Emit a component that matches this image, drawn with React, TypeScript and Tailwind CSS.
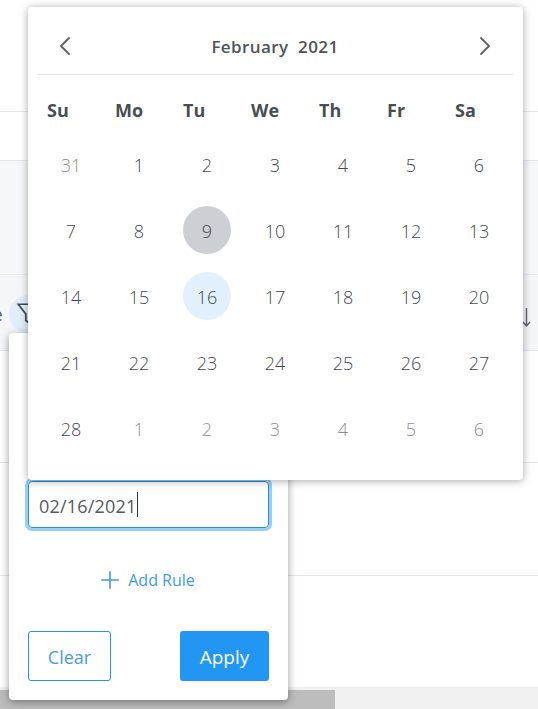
import { ChevronLeft, ChevronRight, Plus } from 'lucide-react'

const WEEKDAYS = ['Su', 'Mo', 'Tu', 'We', 'Th', 'Fr', 'Sa']

type Day = { label: number; muted?: boolean; tone?: 'hover' | 'selected' }

const DAYS: Day[] = [
  { label: 31, muted: true },
  ...[1, 2, 3, 4, 5, 6].map((label) => ({ label })),
  ...[7, 8].map((label) => ({ label })),
  { label: 9, tone: 'hover' as const },
  ...[10, 11, 12, 13, 14, 15].map((label) => ({ label })),
  { label: 16, tone: 'selected' as const },
  ...[17, 18, 19, 20, 21, 22, 23, 24, 25, 26, 27, 28].map((label) => ({ label })),
  ...[1, 2, 3, 4, 5, 6].map((label) => ({ label, muted: true })),
]

function DayCell({ day }: { day: Day }) {
  const tone =
    day.tone === 'hover' ? 'bg-[#ccd0d5]' : day.tone === 'selected' ? 'bg-[#e1f0fb]' : ''
  return (
    <div className="flex h-[66px] items-center justify-center">
      <span
        className={`flex h-12 w-12 items-center justify-center rounded-full pt-[3px] text-[18px] font-light ${tone} ${
          day.muted ? 'text-[#8f8f8f]' : 'text-[#444a50]'
        }`}
      >
        {day.label}
      </span>
    </div>
  )
}

function Calendar() {
  return (
    <div className="absolute left-[28px] top-[7px] h-[473px] w-[495px] rounded-[4px] bg-white pl-[9px] pr-[10px] shadow-[0_1px_8px_rgba(0,0,0,0.35)]">
      <div className="flex h-[68px] items-center justify-between border-b border-[#e3e4e6] px-[12px] pt-[10px] text-[#5f6368]">
        <ChevronLeft className="h-[32px] w-[32px]" strokeWidth={1.4} />
        <span className="mt-[2px] whitespace-pre text-[17px] font-semibold tracking-[0.4px] text-[#4f5459]">February  2021</span>
        <ChevronRight className="h-[32px] w-[32px]" strokeWidth={1.4} />
      </div>
      <div className="grid grid-cols-[repeat(7,68px)]">
        {WEEKDAYS.map((name) => (
          <div key={name} className="flex h-[56px] items-center pl-[10px] pt-[14px] text-[18px] font-bold text-[#494e53]">
            {name}
          </div>
        ))}
      </div>
      <div className="grid grid-cols-[repeat(7,68px)]">
        {DAYS.map((day, i) => (
          <DayCell key={i} day={day} />
        ))}
      </div>
    </div>
  )
}

function FilterPopup() {
  return (
    <div className="absolute left-[9px] top-[333px] flex h-[367px] w-[279px] flex-col justify-end rounded-[4px] bg-white px-[19px] pb-[19px] shadow-[0_2px_8px_rgba(0,0,0,0.4)]">
      <div className="flex h-[47px] items-center rounded-[4px] border border-[#2b8fd8] pl-[10px] text-[18px] text-[#555b61] shadow-[0_0_0_3px_#98cdf8]">
        <span className="pt-[3px] tracking-[0.2px]">02/16/2021</span>
        <span className="h-[25px] w-px bg-[#333]" />
      </div>
      <div className="mt-[30px] flex h-[44px] items-center justify-center gap-[4px] pr-[6px] text-[16px] text-[#3d9be9]">
        <Plus className="h-[28px] w-[28px]" strokeWidth={1.4} />
        Add Rule
      </div>
      <div className="mt-[29px] flex items-center justify-between">
        <button className="h-[50px] w-[83px] rounded-[3px] border border-[#2b93e0] pt-[2px] text-[18px] text-[#4a9ae0]">
          Clear
        </button>
        <button className="h-[50px] w-[89px] rounded-[3px] bg-[#2196f3] pt-[2px] text-[19px] text-white">
          Apply
        </button>
      </div>
    </div>
  )
}

function FilterIcon() {
  return (
    <span className="flex h-[38px] w-[38px] shrink-0 items-center justify-center rounded-full bg-[#e1eefa]">
      <svg viewBox="0 0 24 24" className="h-[26px] w-[26px] text-[#3e4a55]" fill="none" stroke="currentColor" strokeWidth="1.6">
        <path d="M3 3h18l-7 9v9l-4-3v-6z" />
      </svg>
    </span>
  )
}

function SortArrow() {
  return (
    <svg viewBox="0 0 9 19" className="h-[19px] w-[9px] text-[#5f6368]" fill="none" stroke="currentColor" strokeWidth="1.4">
      <path d="M4.5 0v18M1 14l3.5 4 3.5-4" />
    </svg>
  )
}

export default function App() {
  return (
    <div className="relative flex h-[709px] w-[538px] flex-col overflow-hidden bg-white font-['Open_Sans',sans-serif]">
      <div className="h-[112px] shrink-0 border-b border-[#e6e6e6]" />
      <div className="h-[49px] shrink-0 border-b border-[#e6e6e6]" />
      <div className="h-[114px] shrink-0 border-b border-[#e9ebee] bg-[#f5f7fa]" />
      <div className="flex h-[76px] shrink-0 items-center justify-between border-b border-[#e6e6e6] bg-[#f5f6fa] pt-[3px]">
        <div className="flex items-center gap-[6px]">
          <span className="-ml-[37px] text-[18px] text-[#555b61]">Date</span>
          <FilterIcon />
        </div>
        <span className="mr-[7px] mt-[7px]">
          <SortArrow />
        </span>
      </div>
      <div className="h-[112px] shrink-0 border-b border-[#e6e6e6]" />
      <div className="h-[113px] shrink-0 border-b border-[#e6e6e6]" />
      <div className="min-h-0 flex-1" />
      <div className="flex h-[22px] shrink-0 items-end bg-[#f0f0f0]">
        <div className="h-[19px] w-[335px] bg-[#bdbdbd]" />
      </div>
      <FilterPopup />
      <Calendar />
    </div>
  )
}
